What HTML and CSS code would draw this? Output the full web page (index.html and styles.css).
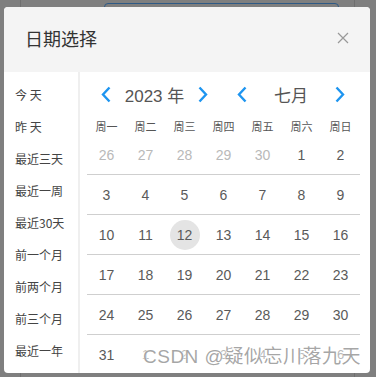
FILE: index.html
```html
<!DOCTYPE html>
<html lang="zh">
<head>
<meta charset="utf-8">
<link rel="stylesheet" href="styles.css">
</head>
<body>
<div class="page">
  <div class="bg-line bg-line-left"></div>
  <div class="bg-line bg-line-right"></div>
  <div class="bg-input"></div>

  <div class="dialog">
    <div class="dlg-head">
      <span class="dlg-title">日期选择</span>
      <svg class="dlg-close" width="12" height="12" viewBox="0 0 12 12"><path d="M1 1L11 11M11 1L1 11" stroke="#999" stroke-width="1.2" fill="none"/></svg>
    </div>
    <div class="dlg-body">
      <ul class="side">
        <li>今 天</li>
        <li>昨 天</li>
        <li>最近三天</li>
        <li>最近一周</li>
        <li>最近30天</li>
        <li>前一个月</li>
        <li>前两个月</li>
        <li>前三个月</li>
        <li>最近一年</li>
      </ul>
      <div class="cal">
        <div class="nav">
          <span class="arrow"><svg width="10" height="17" viewBox="0 0 10 17"><path d="M8.5 1.5L2 8.5L8.5 15.5" stroke="#1e95f0" stroke-width="2.4" fill="none"/></svg></span>
          <span class="nav-text year">2023 年</span>
          <span class="arrow"><svg width="10" height="17" viewBox="0 0 10 17"><path d="M1.5 1.5L8 8.5L1.5 15.5" stroke="#1e95f0" stroke-width="2.4" fill="none"/></svg></span>
          <span class="nav-gap"></span>
          <span class="arrow"><svg width="10" height="17" viewBox="0 0 10 17"><path d="M8.5 1.5L2 8.5L8.5 15.5" stroke="#1e95f0" stroke-width="2.4" fill="none"/></svg></span>
          <span class="nav-text month">七月</span>
          <span class="arrow"><svg width="10" height="17" viewBox="0 0 10 17"><path d="M1.5 1.5L8 8.5L1.5 15.5" stroke="#1e95f0" stroke-width="2.4" fill="none"/></svg></span>
        </div>
        <div class="weeks">
          <span>周一</span><span>周二</span><span>周三</span><span>周四</span><span>周五</span><span>周六</span><span>周日</span>
        </div>
        <div class="row">
          <span class="d muted">26</span><span class="d muted">27</span><span class="d muted">28</span><span class="d muted">29</span><span class="d muted">30</span><span class="d">1</span><span class="d">2</span>
        </div>
        <div class="row">
          <span class="d">3</span><span class="d">4</span><span class="d">5</span><span class="d">6</span><span class="d">7</span><span class="d">8</span><span class="d">9</span>
        </div>
        <div class="row">
          <span class="d">10</span><span class="d">11</span><span class="d"><span class="sel">12</span></span><span class="d">13</span><span class="d">14</span><span class="d">15</span><span class="d">16</span>
        </div>
        <div class="row">
          <span class="d">17</span><span class="d">18</span><span class="d">19</span><span class="d">20</span><span class="d">21</span><span class="d">22</span><span class="d">23</span>
        </div>
        <div class="row">
          <span class="d">24</span><span class="d">25</span><span class="d">26</span><span class="d">27</span><span class="d">28</span><span class="d">29</span><span class="d">30</span>
        </div>
        <div class="row last">
          <span class="d">31</span><span class="d muted small">1</span><span class="d muted small">2</span><span class="d muted small">3</span><span class="d muted small">4</span><span class="d muted small">5</span><span class="d muted small">6</span>
        </div>
      </div>
    </div>
    <div class="watermark">CSDN @疑似忘川落九天</div>
  </div>
</div>
</body>
</html>
```

FILE: styles.css
```css
html, body {
  margin: 0;
  padding: 0;
}
body {
  background: #7f7f7f;
  font-family: "Liberation Sans", "Noto Sans CJK SC", sans-serif;
}
.page {
  position: relative;
  width: 376px;
  height: 377px;
  overflow: hidden;
  background: #7f7f7f;
}
.bg-line {
  position: absolute;
  top: 0;
  width: 1px;
  height: 377px;
  background: #6f6f6f;
}
.bg-line-left { left: 20px; }
.bg-line-right { left: 354px; }
.bg-input {
  position: absolute;
  left: 104px;
  top: 3px;
  width: 233px;
  height: 30px;
  border: 1px solid #2e5a86;
  border-radius: 4px;
}
.dialog {
  position: absolute;
  left: 4px;
  top: 7px;
  width: 366px;
  height: 366px;
  background: #fff;
  border-radius: 4px;
  overflow: hidden;
  display: flex;
  flex-direction: column;
}
.dlg-head {
  height: 65px;
  flex: none;
  background: #f4f4f4;
  display: flex;
  align-items: center;
  justify-content: space-between;
  padding: 0 21px 3px 21px;
  box-sizing: border-box;
}
.dlg-title {
  font-family: "Noto Sans CJK SC", sans-serif;
  font-size: 18px;
  color: #333;
}
.dlg-close {
  display: block;
}
.dlg-body {
  flex: 1;
  display: flex;
}
.side {
  list-style: none;
  margin: 0;
  padding: 7px 0 0 11px;
  width: 76px;
  box-sizing: border-box;
  border-right: 2px solid #efefef;
}
.side li {
  height: 32px;
  line-height: 32px;
  font-family: "Noto Sans CJK SC", sans-serif;
  font-size: 12px;
  color: #444;
  white-space: pre;
}
.cal {
  padding-left: 7px;
  width: 273px;
}
.nav {
  height: 45px;
  display: flex;
  align-items: center;
  padding-left: 9px;
}
.arrow {
  width: 20px;
  display: flex;
  justify-content: center;
  align-items: center;
}
.arrow svg { display: block; }
.nav-text {
  font-size: 17px;
  color: #555;
  text-align: center;
}
.year { width: 77px; }
.month { width: 78px; }
.nav-gap { width: 19px; }
.weeks {
  height: 18px;
  display: grid;
  grid-template-columns: repeat(7, 39px);
  align-items: center;
}
.weeks span {
  text-align: center;
  font-family: "Noto Sans CJK SC", sans-serif;
  font-size: 11px;
  color: #555;
}
.row {
  height: 39px;
  border-bottom: 1px solid #cfcfcf;
  display: grid;
  grid-template-columns: repeat(7, 39px);
  align-items: center;
}
.row.last { border-bottom: none; }
.d {
  text-align: center;
  font-size: 14px;
  color: #5a5a5a;
  display: flex;
  justify-content: center;
  align-items: center;
}
.d.muted { color: #b9b9b9; }
.d.small { font-size: 13px; }
.sel {
  width: 30px;
  height: 30px;
  border-radius: 50%;
  background: #e4e4e4;
  display: flex;
  justify-content: center;
  align-items: center;
}
.watermark {
  position: absolute;
  left: 139px;
  top: 334px;
  font-family: "Liberation Sans", "Noto Sans CJK SC", sans-serif;
  font-size: 19px;
  letter-spacing: 0.5px;
  color: rgba(150, 150, 150, 0.85);
  text-shadow: 0 0 2px #fff, 0 0 1px #fff;
  white-space: nowrap;
}
```
